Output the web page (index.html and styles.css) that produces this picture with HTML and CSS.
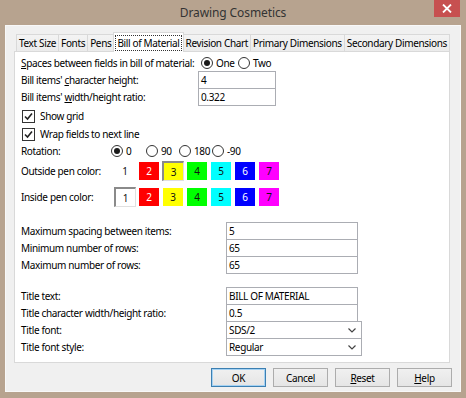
FILE: index.html
```html
<!DOCTYPE html>
<html>

<head>
    <title>Drawing Cosmetics</title>
    <link rel="stylesheet" href="styles.css">
</head>

<body>
    <div class="ventana">
        <div class="titulo">
            <span>Drawing Cosmetics</span>
            <div class="cerrar">
                <svg width="10" height="9" viewBox="0 0 10 9">
                    <path d="M1 0.5 L9 8.5 M9 0.5 L1 8.5" stroke="#fff" stroke-width="1.8" />
                </svg>
            </div>
        </div>

        <div class="cliente">
            <div class="pestanas">
                <div class="pestana">Text Size</div>
                <div class="pestana">Fonts</div>
                <div class="pestana">Pens</div>
                <div class="pestana activa"><span>Bill of Material</span></div>
                <div class="pestana">Revision Chart</div>
                <div class="pestana">Primary Dimensions</div>
                <div class="pestana">Secondary Dimensions</div>
            </div>

            <div class="panel">
                <div class="fila f16">
                    <div class="etiqueta primera"><u>S</u>paces between fields in bill of material:</div>
                    <div class="opcion uno">
                        <div class="radio marcado"></div>
                        <span>One</span>
                    </div>
                    <div class="opcion">
                        <div class="radio"></div>
                        <span>Two</span>
                    </div>
                </div>
                <div class="fila campo">
                    <div class="etiqueta">Bill items' <u>c</u>haracter height:</div>
                    <div class="entrada corta">4</div>
                </div>
                <div class="fila campo">
                    <div class="etiqueta">Bill items' <u>w</u>idth/height ratio:</div>
                    <div class="entrada corta">0.322</div>
                </div>
                <div class="fila check primero">
                    <div class="caja">
                        <svg width="9" height="9" viewBox="0 0 9 9">
                            <path d="M1 4.5 L3.5 7 L8 1.5" fill="none" stroke="#222" stroke-width="1.6" />
                        </svg>
                    </div>
                    <span>Show grid</span>
                </div>
                <div class="fila check">
                    <div class="caja">
                        <svg width="9" height="9" viewBox="0 0 9 9">
                            <path d="M1 4.5 L3.5 7 L8 1.5" fill="none" stroke="#222" stroke-width="1.6" />
                        </svg>
                    </div>
                    <span>Wrap fields to next line</span>
                </div>
                <div class="fila f16">
                    <div class="etiqueta rot">Rotation:</div>
                    <div class="opcion g0">
                        <div class="radio marcado"></div>
                        <span>0</span>
                    </div>
                    <div class="opcion g90">
                        <div class="radio"></div>
                        <span>90</span>
                    </div>
                    <div class="opcion g180">
                        <div class="radio"></div>
                        <span>180</span>
                    </div>
                    <div class="opcion">
                        <div class="radio"></div>
                        <span>-90</span>
                    </div>
                </div>
                <div class="fila colores fuera">
                    <div class="etiqueta pen">Outside pen color:</div>
                    <div class="muestra">1</div>
                    <div class="muestra rojo claro">2</div>
                    <div class="muestra amarillo hundido">3</div>
                    <div class="muestra verde">4</div>
                    <div class="muestra cian">5</div>
                    <div class="muestra azul claro">6</div>
                    <div class="muestra magenta">7</div>
                </div>
                <div class="fila colores dentro">
                    <div class="etiqueta pen">Inside pen color:</div>
                    <div class="muestra blanco hundido">1</div>
                    <div class="muestra rojo claro">2</div>
                    <div class="muestra amarillo">3</div>
                    <div class="muestra verde">4</div>
                    <div class="muestra cian">5</div>
                    <div class="muestra azul claro">6</div>
                    <div class="muestra magenta">7</div>
                </div>

                <div class="bloque">
                    <div class="fila campo">
                        <div class="etiqueta ancha">Maximum spacing between items:</div>
                        <div class="entrada larga">5</div>
                    </div>
                    <div class="fila campo">
                        <div class="etiqueta ancha">Minimum number of rows:</div>
                        <div class="entrada larga">65</div>
                    </div>
                    <div class="fila campo">
                        <div class="etiqueta ancha">Maximum number of rows:</div>
                        <div class="entrada larga">65</div>
                    </div>
                </div>

                <div class="bloque">
                    <div class="fila campo">
                        <div class="etiqueta ancha">Title text:</div>
                        <div class="entrada larga">BILL OF MATERIAL</div>
                    </div>
                    <div class="fila campo">
                        <div class="etiqueta ancha">Title character width/height ratio:</div>
                        <div class="entrada larga">0.5</div>
                    </div>
                    <div class="fila campo">
                        <div class="etiqueta ancha">Title font:</div>
                        <div class="entrada lista">
                            <span>SDS/2</span>
                            <svg width="8" height="5" viewBox="0 0 8 5">
                                <path d="M0.5 0.5 L4 4 L7.5 0.5" fill="none" stroke="#444" stroke-width="1.2" />
                            </svg>
                        </div>
                    </div>
                    <div class="fila campo">
                        <div class="etiqueta ancha">Title font style:</div>
                        <div class="entrada lista">
                            <span>Regular</span>
                            <svg width="8" height="5" viewBox="0 0 8 5">
                                <path d="M0.5 0.5 L4 4 L7.5 0.5" fill="none" stroke="#444" stroke-width="1.2" />
                            </svg>
                        </div>
                    </div>
                </div>
            </div>

            <div class="botones">
                <div class="boton defecto">OK</div>
                <div class="boton">Cancel</div>
                <div class="boton"><u>R</u>eset</div>
                <div class="boton"><u>H</u>elp</div>
            </div>
        </div>
    </div>
</body>

</html>
```

FILE: styles.css
```css
body {
    margin: 0;
    font-family: "Noto Sans", sans-serif;
    font-size: 10px;
    letter-spacing: -0.35px;
    color: #000;
}

.ventana {
    width: 466px;
    height: 398px;
    box-sizing: border-box;
    background-color: rgb(183, 163, 143);
    padding: 0 5px 6px 5px;
    display: flex;
    flex-direction: column;
}

.titulo {
    height: 25px;
    position: relative;
    display: flex;
    justify-content: center;
    align-items: center;
    font-size: 12px;
    letter-spacing: -0.1px;
    color: #333;
}

.titulo span {
    margin-top: -1px;
}

.cerrar {
    position: absolute;
    top: 0;
    right: 1px;
    width: 26px;
    height: 17px;
    background-color: rgb(199, 80, 80);
    display: flex;
    justify-content: center;
    align-items: center;
}

.cliente {
    flex: 1;
    background-color: #f0f0f0;
    border: 1px solid #f8f8f8;
    padding: 6px 10px 0 8px;
    display: flex;
    flex-direction: column;
}

.pestanas {
    display: flex;
    align-items: flex-end;
    height: 19px;
    padding-left: 2px;
}

.pestana {
    height: 17px;
    box-sizing: border-box;
    padding: 0 2px;
    border: 1px solid #d9d9d9;
    border-bottom: none;
    border-right: none;
    background: linear-gradient(#f3f3f3, #ebebeb);
    display: flex;
    align-items: center;
    white-space: nowrap;
}

.pestana:last-child {
    border-right: 1px solid #d9d9d9;
}

.pestana.activa {
    height: 20px;
    margin-bottom: -1px;
    background: #fff;
    border-right: 1px solid #d9d9d9;
    padding: 0 2px;
    position: relative;
    z-index: 1;
}

.pestana.activa span {
    outline: 1px dotted #333;
    padding: 0 1px;
    line-height: 14px;
}

.pestana.activa + .pestana {
    border-left: none;
}

.panel {
    height: 312px;
    box-sizing: border-box;
    background-color: #fff;
    border: 1px solid #d9d9d9;
    padding: 3px 0 0 6px;
}

.fila {
    display: flex;
    align-items: center;
}

.f16 {
    height: 16px;
}

.etiqueta {
    width: 177px;
    white-space: nowrap;
}

.etiqueta.primera {
    width: 180px;
}

.etiqueta.ancha {
    width: 205px;
}

.etiqueta.rot {
    width: 90px;
}

.etiqueta.pen {
    width: 91px;
}

.campo + .campo {
    margin-top: -1px;
}

.entrada {
    height: 18px;
    box-sizing: border-box;
    border: 1px solid #abadb3;
    background-color: #fff;
    padding: 0 2px;
    display: flex;
    align-items: center;
}

.entrada.corta {
    width: 78px;
}

.entrada.larga {
    width: 132px;
}

.entrada.lista {
    width: 136px;
    justify-content: space-between;
    padding-right: 5px;
}

.opcion {
    display: flex;
    align-items: center;
}

.opcion.uno {
    width: 37px;
}

.opcion.g0 {
    width: 35px;
}

.opcion.g90 {
    width: 33px;
}

.opcion.g180 {
    width: 33px;
}

.radio {
    width: 12px;
    height: 12px;
    box-sizing: border-box;
    border: 1px solid #333;
    border-radius: 50%;
    margin-right: 3px;
    display: flex;
    justify-content: center;
    align-items: center;
}

.radio.marcado::after {
    content: "";
    width: 6px;
    height: 6px;
    border-radius: 50%;
    background-color: #1a1a1a;
}

.check {
    height: 18px;
    padding-left: 1px;
}

.check.primero {
    margin-top: 1px;
}

.caja {
    width: 13px;
    height: 13px;
    box-sizing: border-box;
    border: 1px solid #333;
    margin-right: 5px;
    display: flex;
    justify-content: center;
    align-items: center;
}

.colores {
    height: 20px;
    gap: 2px;
}

.fuera {
    margin-top: 2px;
}

.dentro {
    margin-top: 6px;
}

.muestra {
    width: 22px;
    height: 20px;
    box-sizing: border-box;
    border: 1px solid #fff;
    display: flex;
    justify-content: center;
    align-items: center;
    color: #111;
}

.muestra.hundido {
    border-top: 2px solid #8a8a8a;
    border-left: 2px solid #8a8a8a;
    border-right: 1px solid #e0e0e0;
    border-bottom: 1px solid #e0e0e0;
}

.rojo {
    background-color: #ff0000;
}

.amarillo {
    background-color: #ffff00;
}

.verde {
    background-color: #00ff00;
}

.cian {
    background-color: #00ffff;
}

.azul {
    background-color: #0000ff;
}

.magenta {
    background-color: #ff00ff;
}

.blanco {
    background-color: #fff;
}

.claro {
    color: #fff;
}

.bloque {
    margin-top: 15px;
}

.bloque + .bloque {
    margin-top: 13px;
}

.botones {
    display: flex;
    justify-content: flex-end;
    gap: 7px;
    margin-top: 5px;
    margin-right: -2px;
}

.boton {
    width: 55px;
    height: 19px;
    box-sizing: border-box;
    border: 1px solid #acacac;
    background: linear-gradient(#f0f0f0, #e5e5e5);
    display: flex;
    justify-content: center;
    align-items: center;
}

.boton.defecto {
    border-color: #3c7fb1;
    box-shadow: inset 0 0 0 1px #a5d2f3;
}
```
